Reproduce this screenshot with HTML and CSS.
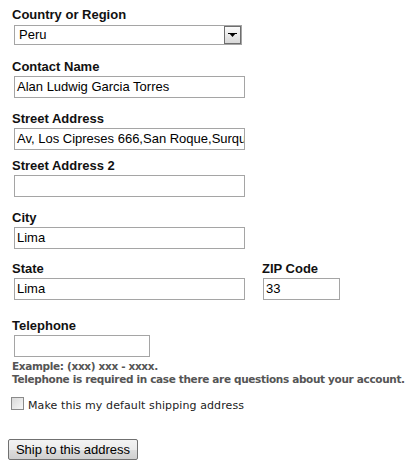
FILE: index.html
```html
<!DOCTYPE html>
<html>
<head>
<meta charset="utf-8">
<link rel="stylesheet" href="styles.css">
</head>
<body>
<form class="form">
  <div class="field first">
    <label class="label">Country or Region</label>
    <div class="select">
      <span class="select-value">Peru</span>
      <span class="select-btn"><svg width="9" height="5" viewBox="0 0 9 5"><path d="M1 0h7L4.5 4z" fill="#000"/><path d="M0 0h9v1H0z" fill="#000"/></svg></span>
    </div>
  </div>
  <div class="field gap-14">
    <label class="label">Contact Name</label>
    <div class="input wide">Alan Ludwig Garcia Torres</div>
  </div>
  <div class="field gap-13">
    <label class="label">Street Address</label>
    <div class="input wide">Av, Los Cipreses 666,San Roque,Surquillo</div>
  </div>
  <div class="field gap-8">
    <label class="label">Street Address 2</label>
    <div class="input wide"></div>
  </div>
  <div class="field gap-13">
    <label class="label">City</label>
    <div class="input wide">Lima</div>
  </div>
  <div class="row gap-12">
    <div class="field state">
      <label class="label">State</label>
      <div class="input wide">Lima</div>
    </div>
    <div class="field">
      <label class="label">ZIP Code</label>
      <div class="input zip">33</div>
    </div>
  </div>
  <div class="field gap-18">
    <label class="label">Telephone</label>
    <div class="input phone"></div>
  </div>
  <p class="hint">Example: (xxx) xxx - xxxx.<br>Telephone is required in case there are questions about your account.</p>
  <div class="check-row">
    <span class="checkbox"></span>
    <span class="check-label">Make this my default shipping address</span>
  </div>
  <button type="button" class="button">Ship to this address</button>
</form>
</body>
</html>
```
FILE: styles.css
```css
html, body {
  margin: 0;
  padding: 0;
  background: #fff;
}

.form {
  padding: 7px 0 0 12px;
  font-family: "Liberation Sans", Arial, sans-serif;
  color: #000;
}

.field {
  display: flex;
  flex-direction: column;
  align-items: flex-start;
}

.gap-8 { margin-top: 8px; }
.gap-12 { margin-top: 12px; }
.gap-13 { margin-top: 13px; }
.gap-14 { margin-top: 14px; }
.gap-18 { margin-top: 18px; }

.label {
  font-size: 13px;
  font-weight: bold;
  line-height: 16px;
  margin-bottom: 1px;
  color: #111;
}

.first .label { margin-bottom: 2px; }

.select {
  margin-left: 2px;
  width: 228px;
  height: 20px;
  box-sizing: border-box;
  border: 1px solid #a5a5a5;
  display: flex;
  align-items: stretch;
  background: #fff;
}

.select-value {
  flex: 1;
  font-size: 13px;
  line-height: 18px;
  padding-left: 4px;
}

.select-btn {
  width: 17px;
  box-sizing: border-box;
  border: 1px solid #6e6e6e;
  background: linear-gradient(#fbfbfb, #d8d8d8);
  display: flex;
  align-items: center;
  justify-content: center;
  padding-top: 1px;
}

.input {
  margin-left: 2px;
  height: 22px;
  box-sizing: border-box;
  border: 1px solid #a5a5a5;
  font-size: 13px;
  line-height: 20px;
  padding-left: 2px;
  white-space: nowrap;
  overflow: hidden;
  background: #fff;
}

.wide { width: 231px; }
.zip { width: 77px; margin-left: 1px; }
.phone { width: 136px; }

.row {
  display: flex;
}

.state { width: 250px; }

.hint {
  margin: 3px 0 0;
  font-family: "DejaVu Sans", Verdana, sans-serif;
  font-size: 10.5px;
  letter-spacing: -0.34px;
  font-weight: bold;
  line-height: 13px;
  color: #555;
  white-space: nowrap;
}

.check-row {
  display: flex;
  align-items: center;
  margin: 11px 0 0 -1px;
  height: 13px;
}

.checkbox {
  width: 13px;
  height: 13px;
  box-sizing: border-box;
  border: 1px solid #8a8a8a;
  background: linear-gradient(135deg, #d9d9d9, #f7f7f7);
  margin-right: 4px;
}

.check-label {
  font-family: "DejaVu Sans", Verdana, sans-serif;
  font-size: 11px;
  letter-spacing: 0.1px;
  color: #222;
  line-height: 13px;
  padding-top: 3px;
}

.button {
  display: block;
  margin: 29px 0 0 -4px;
  width: 130px;
  height: 21px;
  box-sizing: border-box;
  border: 1px solid #707070;
  border-radius: 2px;
  background: linear-gradient(#f3f3f3 0%, #ebebeb 50%, #dddddd 51%, #cfcfcf 100%);
  font-family: "Liberation Sans", Arial, sans-serif;
  font-size: 13px;
  color: #000;
  padding: 1px 0 0;
  line-height: 18px;
}
```
